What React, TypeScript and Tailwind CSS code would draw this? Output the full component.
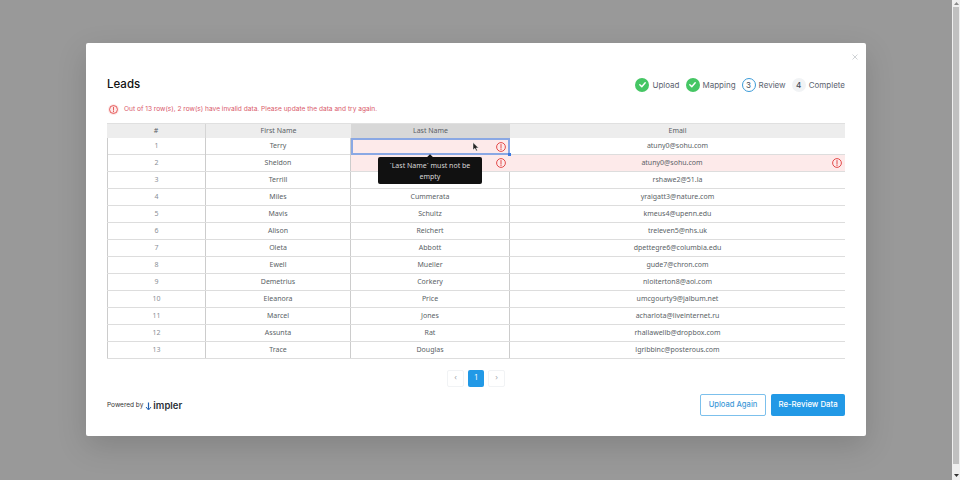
import React from "react";

const rows = [
  ["1", "Terry", "", "atuny0@sohu.com"],
  ["2", "Sheldon", "", "atuny0@sohu.com"],
  ["3", "Terrill", "", "rshawe2@51.la"],
  ["4", "Miles", "Cummerata", "yraigatt3@nature.com"],
  ["5", "Mavis", "Schultz", "kmeus4@upenn.edu"],
  ["6", "Alison", "Reichert", "treleven5@nhs.uk"],
  ["7", "Oleta", "Abbott", "dpettegre6@columbia.edu"],
  ["8", "Ewell", "Mueller", "gude7@chron.com"],
  ["9", "Demetrius", "Corkery", "nloiterton8@aol.com"],
  ["10", "Eleanora", "Price", "umcgourty9@jalbum.net"],
  ["11", "Marcel", "Jones", "acharlota@liveinternet.ru"],
  ["12", "Assunta", "Rat", "rhallawellb@dropbox.com"],
  ["13", "Trace", "Douglas", "lgribbinc@posterous.com"],
];

function Alert({ size = 10 }: { size?: number }) {
  return (
    <svg width={size} height={size} viewBox="0 0 10 10" fill="none" stroke="#e03a3a" strokeWidth="0.9">
      <circle cx="5" cy="5" r="4.4" />
      <path d="M5 2.5V5.6M5 6.8V7.6" strokeLinecap="round" />
    </svg>
  );
}

function Check() {
  return (
    <span className="w-[14px] h-[14px] rounded-full bg-[#45c664] flex items-center justify-center">
      <svg width="9" height="9" viewBox="0 0 10 10" fill="none" stroke="white" strokeWidth="1.6" strokeLinecap="round" strokeLinejoin="round">
        <path d="M2 5.2L4.2 7.4L8 3" />
      </svg>
    </span>
  );
}

function Step({ icon, label }: { icon: React.ReactNode; label: string }) {
  return (
    <div className="flex items-center gap-[3px] text-[8px] text-[#5c6470]">
      {icon}
      <span>{label}</span>
    </div>
  );
}

export default function App() {
  return (
    <div className="w-[960px] h-[480px] bg-[#999999] flex overflow-hidden antialiased">
      <div className="w-[952px] h-[480px] pt-[43px] pl-[86px]">
        <div className="relative w-[780px] h-[393px] bg-white rounded-[2px] shadow-[0_10px_30px_rgba(0,0,0,0.15)] px-[21px] pt-[34px] font-['Inter',sans-serif]">
          <svg className="absolute right-[8px] top-[11px]" width="6" height="6" viewBox="0 0 6 6" stroke="#c4c8cc" strokeWidth="0.8">
            <path d="M0.5 0.5L5.5 5.5M5.5 0.5L0.5 5.5" />
          </svg>

          <div className="flex items-center justify-between h-[15px]">
            <div className="text-[11.5px] font-medium text-[#111111]">Leads</div>
            <div className="flex items-center gap-[6px]">
              <Step icon={<Check />} label="Upload" />
              <Step icon={<Check />} label="Mapping" />
              <Step
                icon={
                  <span className="w-[14px] h-[14px] rounded-full border border-[#3b9bd8] flex items-center justify-center text-[8px] text-[#444b55]">3</span>
                }
                label="Review"
              />
              <Step
                icon={
                  <span className="w-[14px] h-[14px] rounded-full bg-[#f1f3f5] flex items-center justify-center text-[8px] font-medium text-[#444b55]">4</span>
                }
                label="Complete"
              />
            </div>
          </div>

          <div className="flex items-center mt-[11px] h-[13px] gap-[5px] text-[6.6px] text-[#d9596b]">
            <span className="ml-[1px] w-[11px] h-[11px] rounded-full bg-[#fdeaea] flex items-center justify-center">
              <Alert size={9} />
            </span>
            <span>Out of 13 row(s), 2 row(s) have invalid data. Please update the data and try again.</span>
          </div>

          <div className="relative mt-[7px] w-[738px] font-['Noto_Sans',sans-serif] text-[7px] text-[#5a5f66]">
            <div className="grid grid-cols-[99px_145px_159px_335px] h-[15px] bg-[#ededed] border-t border-[#e0e0e0]">
              <div className="flex items-center justify-center border-r border-[#d5d5d5]">#</div>
              <div className="flex items-center justify-center">First Name</div>
              <div className="flex items-center justify-center bg-[#d8d8d8]">Last Name</div>
              <div className="flex items-center justify-center">Email</div>
            </div>
            {rows.map((r, i) => {
              const invalid = i < 2;
              return (
                <div key={r[0]} className="grid grid-cols-[99px_145px_159px_335px] h-[17px] border-b border-[#dddddd]">
                  <div className="flex items-center justify-center border-l border-r border-[#cccccc] text-[#8a8f96]">{r[0]}</div>
                  <div className="flex items-center justify-center border-r border-[#cccccc]">{r[1]}</div>
                  {invalid ? (
                    <div className={`relative flex items-center justify-end bg-[#fdeaea] ${i === 0 ? "border-2 border-[#8aa8e4] h-[17px] pr-[2px]" : "pr-[4px]"}`}>
                      <Alert />
                    </div>
                  ) : (
                    <div className="flex items-center justify-center border-r border-[#cccccc]">{r[2]}</div>
                  )}
                  <div className={`relative flex items-center justify-center ${i === 1 ? "bg-[#fdeaea] pr-[11px]" : ""}`}>
                    {r[3]}
                    {i === 1 && (
                      <span className="absolute right-[3px] top-[3px]">
                        <Alert />
                      </span>
                    )}
                  </div>
                </div>
              );
            })}
            <span className="absolute left-[401px] top-[30px] w-[3px] h-[3px] bg-[#3a78e0]" />
            <div className="absolute left-[271px] top-[34px] w-[104px] h-[27px] rounded-[2px] bg-[#111111] text-[#d8d8d8] text-[7px] leading-[11px] text-center pt-[3px] px-[8px]">
              <span className="absolute left-[50px] -top-[2px] w-[4px] h-[4px] rotate-45 bg-[#111111]" />
              `Last Name` must not be empty
            </div>
            <svg className="absolute left-[365px] top-[19px]" width="8" height="10" viewBox="0 0 8 10">
              <path d="M1 0.5V8L2.9 6.3L4.2 9L5.4 8.4L4.2 5.9H6.6Z" fill="#222222" stroke="white" strokeWidth="0.5" />
            </svg>
          </div>

          <div className="flex justify-center items-center gap-[4px] mt-[11px] text-[7px]">
            <div className="w-[17px] h-[17px] border border-[#f1f3f5] rounded-[2px] flex items-center justify-center text-[#9aa0a6]">‹</div>
            <div className="w-[16px] h-[17px] bg-[#2299e6] rounded-[2px] flex items-center justify-center text-white">1</div>
            <div className="w-[17px] h-[17px] border border-[#f1f3f5] rounded-[2px] flex items-center justify-center text-[#9aa0a6]">›</div>
          </div>

          <div className="flex items-center justify-between mt-[7px]">
            <div className="flex items-center gap-[2px] mt-[2px]">
              <span className="text-[6.5px] text-[#333333]">Powered by</span>
              <svg width="7" height="9" viewBox="0 0 7 9" className="mt-[1px]" fill="none">
                <path d="M3.5 0.5V7" stroke="#1f5fb0" strokeWidth="1.2" />
                <path d="M1 5L3.5 8L6 5" stroke="#1f5fb0" strokeWidth="1" />
              </svg>
              <span className="text-[9.5px] font-semibold text-[#2b2f36] leading-none -ml-[1px]">impler</span>
            </div>
            <div className="flex items-center gap-[5px]">
              <div className="w-[66px] h-[22px] border border-[#7cc0ec] rounded-[2px] flex items-center justify-center text-[7.6px] font-medium text-[#3f9ad8]">Upload Again</div>
              <div className="w-[74px] h-[22px] bg-[#2299e6] rounded-[2px] flex items-center justify-center text-[7.8px] font-medium text-white">Re-Review Data</div>
            </div>
          </div>
        </div>
      </div>
      <div className="w-[8px] h-[480px] bg-[#efefef] flex flex-col items-center">
        <svg width="5" height="7" viewBox="0 0 5 7" className="h-[7px]" fill="#8a8a8a"><path d="M2.5 2L5 5H0Z" /></svg>
        <div className="w-[6px] h-[457px] bg-[#c0c0c0]" />
        <svg width="5" height="16" viewBox="0 0 5 16" fill="#333333"><path d="M0 10H5L2.5 13Z" /></svg>
      </div>
    </div>
  );
}
